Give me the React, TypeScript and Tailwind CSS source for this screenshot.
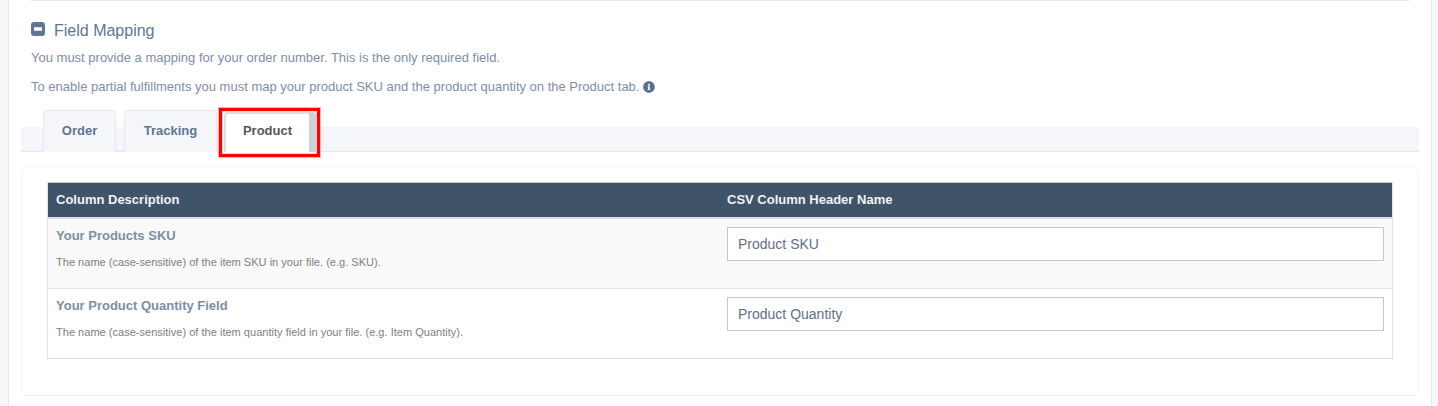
import { FaInfoCircle } from 'react-icons/fa';

const rows = [
  {
    title: 'Your Products SKU',
    help: 'The name (case-sensitive) of the item SKU in your file. (e.g. SKU).',
    value: 'Product SKU',
    shaded: true,
  },
  {
    title: 'Your Product Quantity Field',
    help: 'The name (case-sensitive) of the item quantity field in your file. (e.g. Item Quantity).',
    value: 'Product Quantity',
    shaded: false,
  },
];

export default function App() {
  return (
    <div className="h-[406px] overflow-hidden bg-[#f8f8f8] pr-[6px] pl-[8px] font-['Liberation_Sans',Arial,sans-serif]">
      <div className="h-full border-x border-[#e7e7e7] bg-white px-[12px]">
        <div className="mx-[10px] border-t-[1px] border-[#e5e5e5]" />

        {/* Section header */}
        <div className="mx-[10px] mt-[20px] flex h-[20px] items-center gap-[9px] text-[#5f7594]">
          <svg viewBox="0 0 14 14" className="mt-[-4px] h-[14px] w-[14px]">
            <rect width="14" height="14" rx="3" fill="#5f7594" />
            <rect x="3" y="5.25" width="8" height="3.5" fill="#ffffff" />
          </svg>
          <h3 className="text-[16px] leading-[20px]">Field Mapping</h3>
        </div>
        <p className="mx-[10px] mt-[8px] text-[13px] leading-[18px] text-[#7d8ea8]">
          You must provide a mapping for your order number. This is the only required field.
        </p>
        <p className="mx-[10px] mt-[11px] flex items-center gap-[4px] text-[13px] leading-[18px] text-[#7d8ea8]">
          To enable partial fulfillments you must map your product SKU and the product quantity on the Product tab.
          <FaInfoCircle className="h-[12px] w-[12px] text-[#56708f]" />
        </p>

        {/* Tabs */}
        <div className="relative mt-[14px] h-[42px]">
          <div className="absolute inset-x-0 bottom-0 h-[25px] border-b border-[#e6e8ee] bg-[#f5f6fa]" />
          <div className="relative flex h-full pl-[22px]">
            <div className="flex h-[42px] w-[73px] items-center justify-center rounded-t-[4px] border border-b-0 border-[#e6e8ee] bg-[#f5f6fa] pb-[2px] text-[13px] font-bold text-[#5f7594]">
              Order
            </div>
            <div className="ml-[8px] flex h-[42px] w-[93px] items-center justify-center rounded-t-[4px] border border-b-0 border-[#e6e8ee] bg-[#f5f6fa] pb-[2px] text-[13px] font-bold text-[#5f7594]">
              Tracking
            </div>
            {/* Highlighted active tab */}
            <div className="mt-[-2px] ml-[2px] h-[49px] w-[101px] shrink-0 border-[3px] border-[#ff0000] bg-white pt-[1px] pr-[1px] pl-[2px] shadow-[0_0_0_1px_#ffb0b0,inset_0_0_0_1px_#ffd0d0]">
              <div className="flex h-[40px] rounded-t-[4px] border-t-2 border-l-2 border-[#dedede] bg-white">
                <div className="flex flex-1 items-center justify-center pb-[5px] text-[13px] font-bold text-[#55565a]">
                  Product
                </div>
                <div className="mt-[-2px] w-[7px] rounded-tr-[4px] bg-[#ced1d6]" />
              </div>
            </div>
          </div>
        </div>

        {/* Panel */}
        <div className="mt-[14px] h-[230px] rounded-[6px] border border-[#f8f8f8] border-b-[#f0f0f0] px-[25px] pt-[15px]">
          <div className="border-x border-b border-[#e2e2e2]">
            <div className="grid h-[37px] grid-cols-[671px_1fr] items-center border-t-[1px] border-b-[2px] border-t-[#c4c8cc] border-b-[#dddddd] bg-[#405469] pl-[8px] text-[13px] font-bold text-[#f0f2f4]">
              <div>Column Description</div>
              <div>CSV Column Header Name</div>
            </div>
            {rows.map((row) => (
              <div
                key={row.title}
                className={`grid grid-cols-[671px_1fr] pl-[8px] ${
                  row.shaded ? 'h-[70px] border-b border-[#e2e2e2] bg-[#f9f9f9]' : 'h-[69px] bg-white'
                }`}
              >
                <div>
                  <div className="mt-[8px] text-[13px] leading-[18px] font-bold text-[#7d8ea8]">{row.title}</div>
                  <div className="mt-[10px] text-[11.05px] leading-[14px] text-[#83807c]">{row.help}</div>
                </div>
                <div className="pt-[8px] pr-[8px]">
                  <input
                    readOnly
                    value={row.value}
                    className="h-[34px] w-full border border-[#c8c8c8] bg-white px-[10px] text-[14px] text-[#5f6f86] outline-none"
                  />
                </div>
              </div>
            ))}
          </div>
        </div>
      </div>
    </div>
  );
}
